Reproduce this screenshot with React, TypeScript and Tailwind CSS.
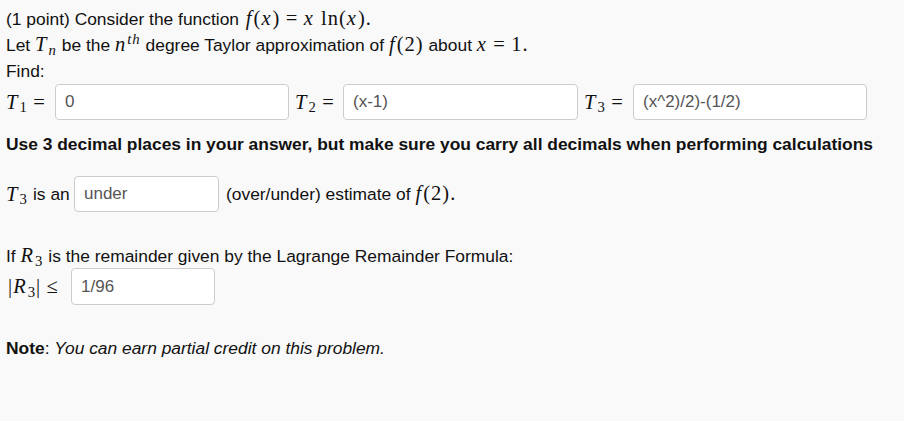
import React from 'react';

const serif = "font-['Liberation_Serif','DejaVu_Serif',serif]";

// inline TeX-like math, bigger than the body text like MathJax renders it
const M: React.FC<{ children: React.ReactNode; className?: string }> = ({ children, className = '' }) => (
  <span className={`${serif} text-[20.5px] leading-none tracking-[0.05em] whitespace-nowrap ${className}`}>{children}</span>
);

const V: React.FC<{ children: React.ReactNode }> = ({ children }) => <i className="pr-[1px]">{children}</i>;

const Sub: React.FC<{ children: React.ReactNode }> = ({ children }) => (
  <sub className="not-italic text-[0.72em]">{children}</sub>
);

const Rel: React.FC<{ children: React.ReactNode }> = ({ children }) => (
  <span className="mx-[0.26em]">{children}</span>
);

interface AnswerProps {
  value: string;
  width: string;
}

const Answer: React.FC<AnswerProps> = ({ value, width }) => (
  <input
    readOnly
    defaultValue={value}
    className={`${width} h-9 shrink-0 bg-white border border-[#cccccc] rounded-[4px] pl-[9px] text-[17px] text-[#555] outline-none font-['Liberation_Sans',Arial,sans-serif]`}
  />
);

export default function App() {
  return (
    <div className="min-h-[421px] bg-[#f9f9f9] pl-[6px] pt-[6px] text-[17.4px] leading-[26px] text-[#111] font-['Liberation_Sans',Arial,sans-serif]">
      <div>
        (1 point) Consider the function{' '}
        <M className="ml-[2px]">
          <V>f</V>(<V>x</V>)<Rel>=</Rel><V>x</V> ln(<V>x</V>).
        </M>
      </div>
      <div>
        Let{' '}
        <M>
          <V>T</V><Sub><i>n</i></Sub>
        </M>{' '}
        be the{' '}
        <M>
          <V>n</V>
          <sup className="italic text-[0.72em]">th</sup>
        </M>{' '}
        degree Taylor approximation of{' '}
        <M>
          <V>f</V>(2)
        </M>{' '}
        about{' '}
        <M>
          <V>x</V><Rel>=</Rel>1.
        </M>
      </div>
      <div>Find:</div>

      <div className="flex items-center h-9">
        <M className="w-[49px]">
          <V>T</V><Sub>1</Sub><Rel>=</Rel>
        </M>
        <Answer value="0" width="w-[234px]" />
        <M className="ml-[6px] w-[48px]">
          <V>T</V><Sub>2</Sub><Rel>=</Rel>
        </M>
        <Answer value="(x-1)" width="w-[235px]" />
        <M className="ml-[6px] w-[49px]">
          <V>T</V><Sub>3</Sub><Rel>=</Rel>
        </M>
        <Answer value="(x^2)/2)-(1/2)" width="w-[234px]" />
      </div>

      <div className="mt-[11px] font-bold">
        Use 3 decimal places in your answer, but make sure you carry all decimals when performing calculations
      </div>

      <div className="flex items-center mt-[19px] h-9">
        <M className="w-[27px]">
          <V>T</V><Sub>3</Sub>
        </M>
        <span className="w-[41px]">is an</span>
        <Answer value="under" width="w-[145px]" />
        <span className="ml-[7px]">
          (over/under) estimate of{' '}
          <M>
            <V>f</V>(2).
          </M>
        </span>
      </div>

      <div className="mt-[32px] leading-[24px]">
        If{' '}
        <M>
          <V>R</V><Sub>3</Sub>
        </M>{' '}
        is the remainder given by the Lagrange Remainder Formula:
      </div>

      <div className="flex items-center h-[37px]">
        <M className="w-[65px] pl-[2px]">
          |<V>R</V><Sub>3</Sub>|<Rel>≤</Rel>
        </M>
        <Answer value="1/96" width="w-[144px] h-[37px]" />
      </div>

      <div className="mt-[30px]">
        <b>Note</b>: <i>You can earn partial credit on this problem.</i>
      </div>
    </div>
  );
}
